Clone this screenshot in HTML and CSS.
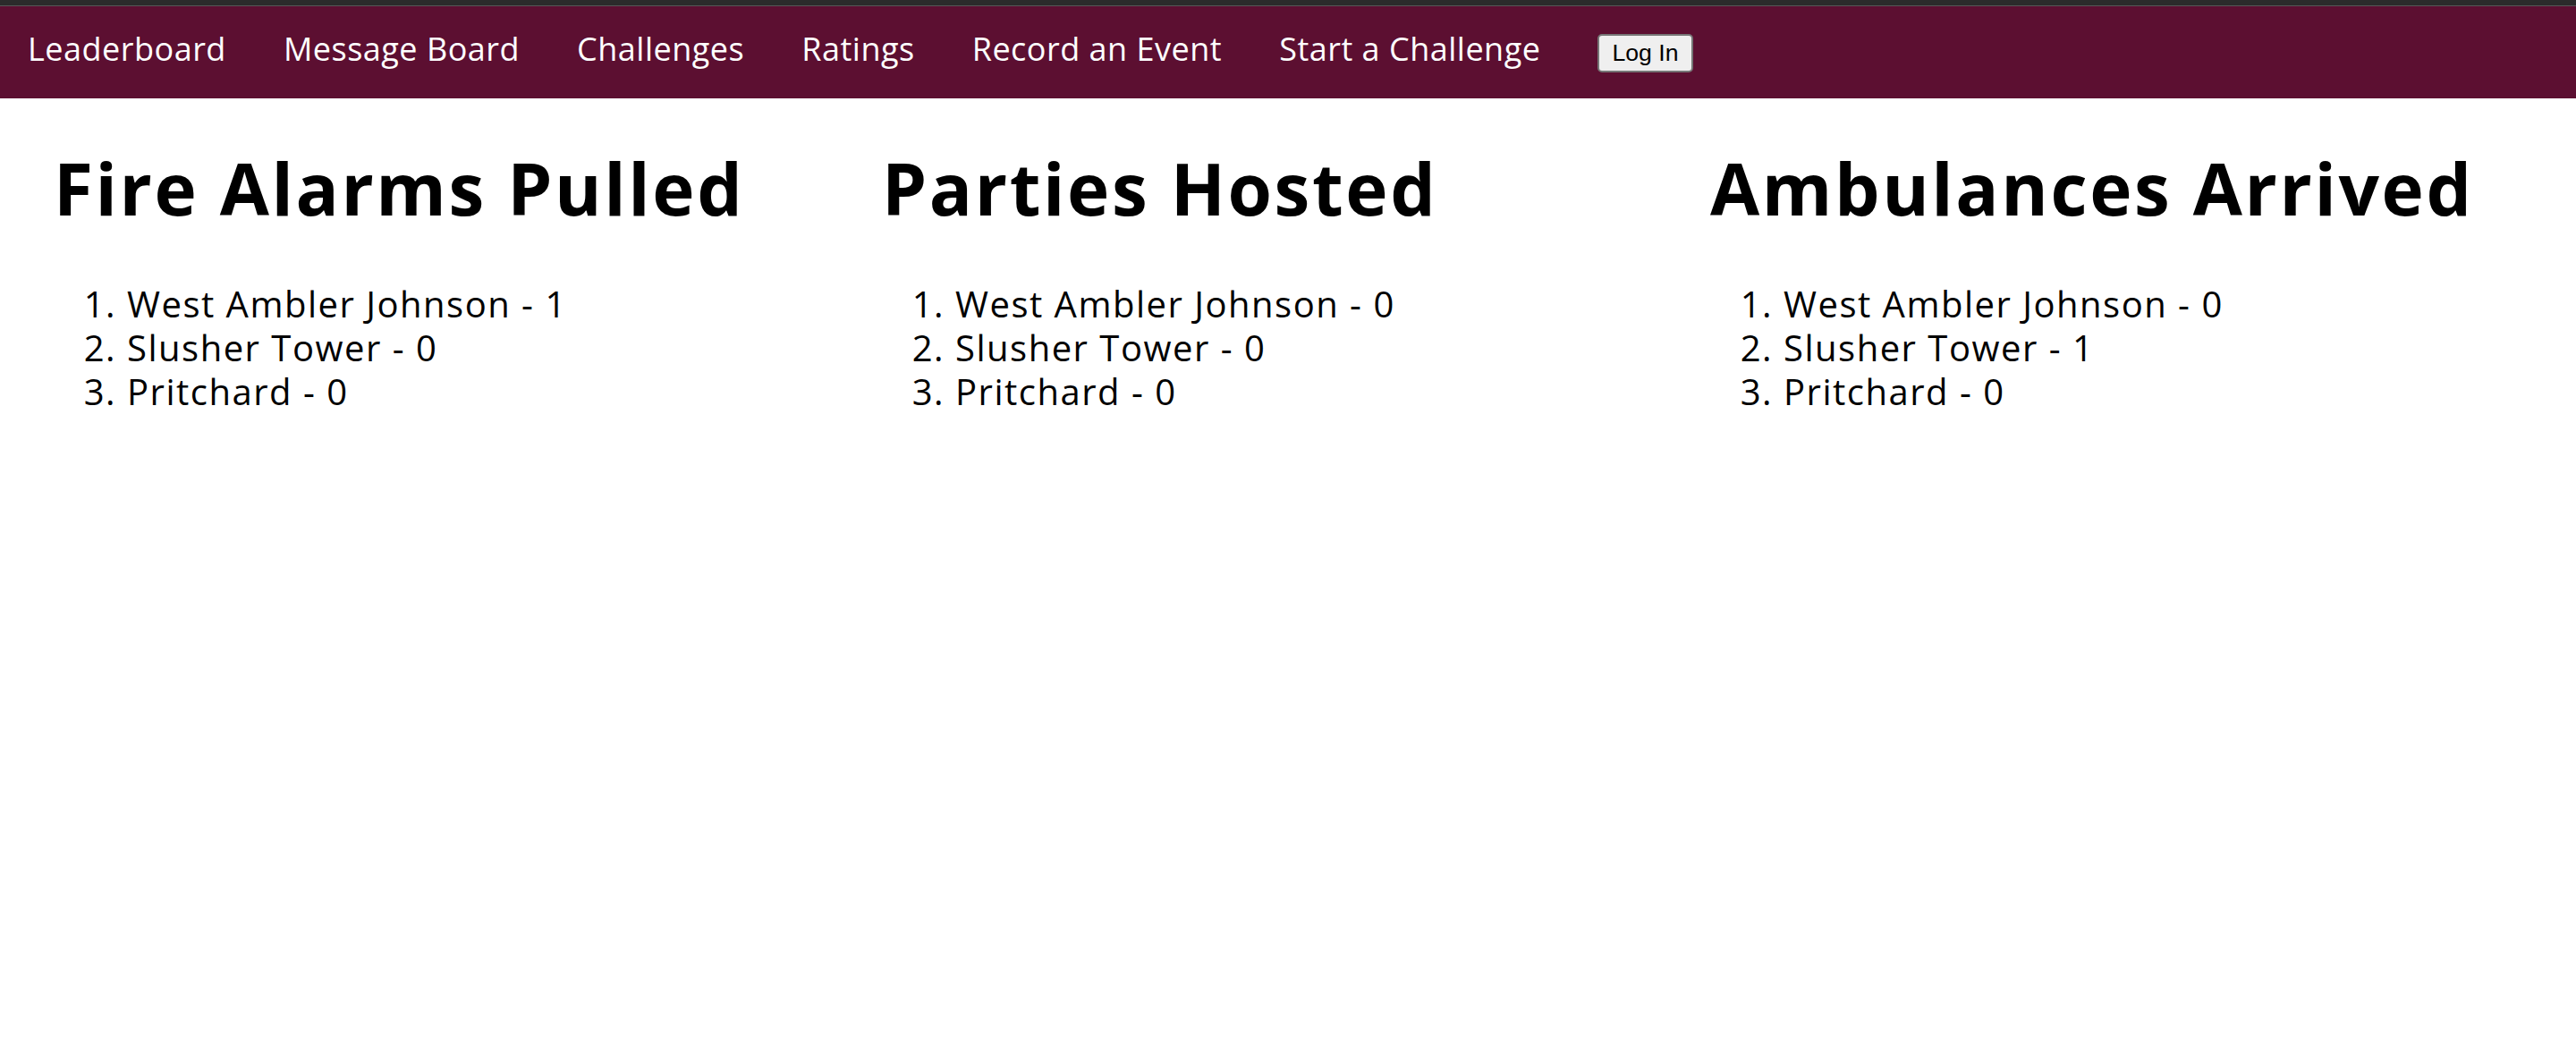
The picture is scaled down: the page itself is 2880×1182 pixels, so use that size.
FILE: index.html
```html
<!DOCTYPE html>
<html lang="en">
<head>
<meta charset="utf-8">
<title>Leaderboard</title>
<link rel="stylesheet" href="styles.css">
</head>
<body>
<div class="topstrip"></div>
<nav class="navbar">
  <a class="nav-link" href="#">Leaderboard</a>
  <a class="nav-link" href="#">Message Board</a>
  <a class="nav-link" href="#">Challenges</a>
  <a class="nav-link" href="#">Ratings</a>
  <a class="nav-link" href="#">Record an Event</a>
  <a class="nav-link" href="#">Start a Challenge</a>
  <button class="login-btn" type="button">Log In</button>
</nav>
<main class="boards">
  <section class="board">
    <h1 class="board-title">Fire Alarms Pulled</h1>
    <ol class="board-list">
      <li>West Ambler Johnson - 1</li>
      <li>Slusher Tower - 0</li>
      <li>Pritchard - 0</li>
    </ol>
  </section>
  <section class="board">
    <h1 class="board-title">Parties Hosted</h1>
    <ol class="board-list">
      <li>West Ambler Johnson - 0</li>
      <li>Slusher Tower - 0</li>
      <li>Pritchard - 0</li>
    </ol>
  </section>
  <section class="board">
    <h1 class="board-title">Ambulances Arrived</h1>
    <ol class="board-list">
      <li>West Ambler Johnson - 0</li>
      <li>Slusher Tower - 1</li>
      <li>Pritchard - 0</li>
    </ol>
  </section>
</main>
</body>
</html>
```

FILE: styles.css
```css
html, body {
  margin: 0;
  padding: 0;
  background: #ffffff;
}

body {
  font-family: "Open Sans", "DejaVu Sans", sans-serif;
  color: #000000;
}

.topstrip {
  height: 6px;
  background: #2b2b2b;
  border-bottom: 1px solid #575757;
}

.navbar {
  box-sizing: border-box;
  height: 103px;
  background: #5c0f31;
  display: flex;
  align-items: baseline;
  gap: 64px;
  padding: 26px 0 0 31px;
}

.nav-link {
  color: #ffffff;
  text-decoration: none;
  font-size: 36px;
  line-height: 43px;
  font-weight: 400;
  letter-spacing: 0.5px;
}

.login-btn {
  font-family: "Liberation Sans", Arial, sans-serif;
  font-size: 26.67px;
  line-height: 31px;
  color: #000000;
  background: #efefef;
  border: 2px solid #767676;
  border-radius: 5px;
  padding: 4px 14px;
  margin: 0;
}

.boards {
  display: grid;
  grid-template-columns: repeat(3, 926px);
  padding: 52px 0 0 60px;
}

.board-title {
  margin: 0;
  font-size: 80px;
  line-height: 96px;
  font-weight: 700;
  letter-spacing: 2.6px;
  white-space: nowrap;
}

.board-list {
  margin: 57px 0 0 0;
  padding-left: 82px;
  font-size: 40px;
  line-height: 49px;
  letter-spacing: 1.5px;
}
```
